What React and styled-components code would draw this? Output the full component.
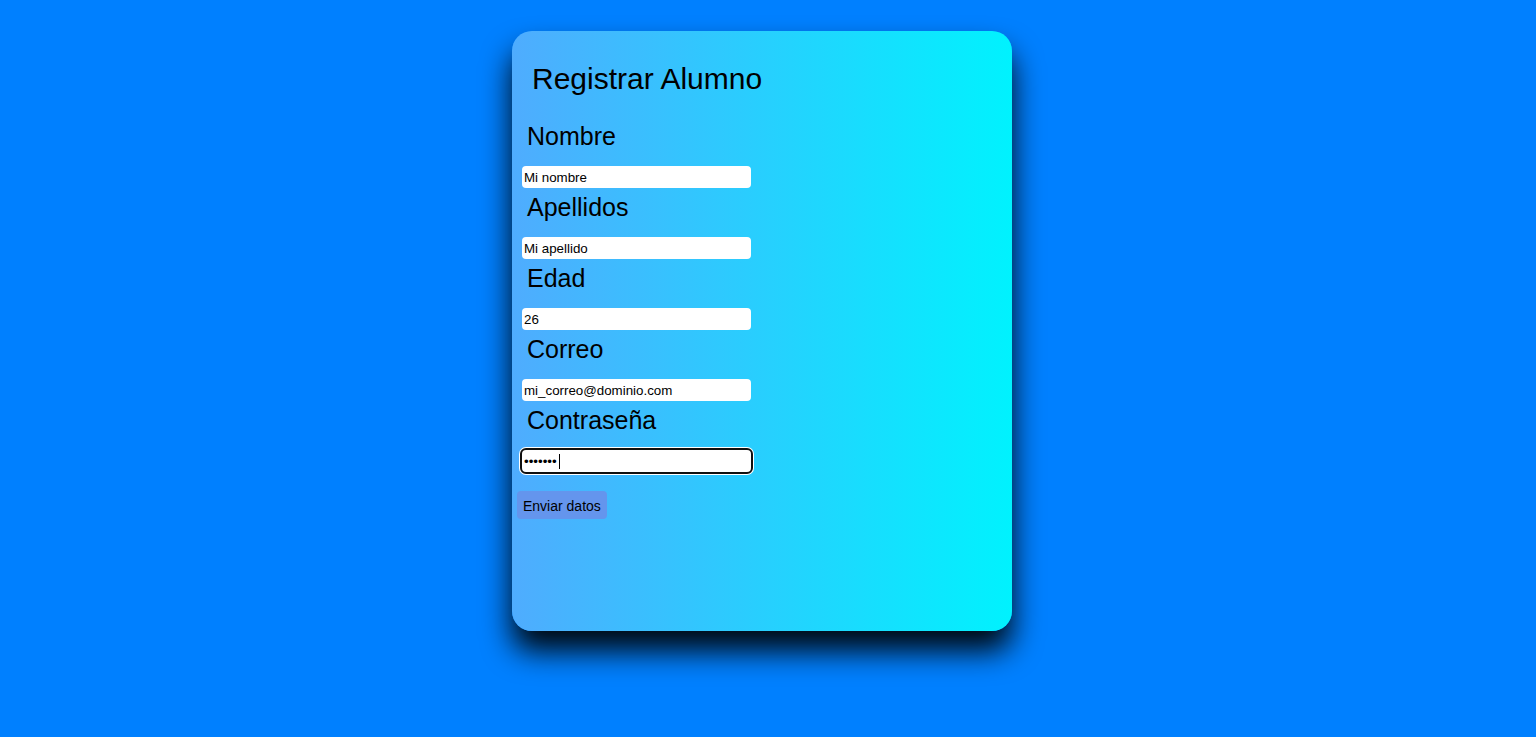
import React from "react";
import styled, { createGlobalStyle } from "styled-components";

const GlobalStyle = createGlobalStyle`
  body {
    margin: 0;
    background-color: #0080ff;
    font-family: "Liberation Sans", Arial, sans-serif;
  }
`;

const Page = styled.div`
  min-height: 100vh;
  box-sizing: border-box;
  padding-top: 31px;
  padding-left: calc(100% / 3);
`;

const Card = styled.div`
  width: 500px;
  height: 600px;
  box-sizing: border-box;
  padding: 0 5px;
  border-radius: 20px;
  background: linear-gradient(to right, #4facfe 0%, #00f2fe 100%);
  box-shadow: 0 20px 30px rgba(0, 0, 0, 0.95);
  display: flex;
  flex-direction: column;
  align-items: flex-start;
`;

const Title = styled.h2`
  margin: 31px 0 20px;
  padding-left: 15px;
  font-size: 30px;
  line-height: 34.5px;
  font-weight: normal;
  color: #000;
`;

const Label = styled.label`
  display: block;
  margin: 5px 0 16px 5px;
  padding-left: 5px;
  font-size: 25px;
  line-height: 28px;
  color: #000;
`;

const InputWrap = styled.div`
  position: relative;
  margin-left: 5px;
`;

const Input = styled.input`
  display: block;
  width: 229px;
  height: 22px;
  box-sizing: border-box;
  padding: 1px 2px 0;
  border: none;
  border-radius: 4px;
  background: #fff;
  color: #000;
  font-family: "Liberation Sans", Arial, sans-serif;
  font-size: 13.33px;
  outline: ${(p) => (p.$focused ? "2px solid #101010" : "none")};
  box-shadow: ${(p) => (p.$focused ? "0 0 0 3px #fff" : "none")};
`;

const Caret = styled.span`
  position: absolute;
  left: 37px;
  top: 4px;
  width: 1px;
  height: 15px;
  background: #000;
`;

const Button = styled.button`
  margin-top: 19px;
  padding: 7px 6px 5px;
  border: none;
  border-radius: 4px;
  background-color: #6495ed;
  color: #000;
  font-family: "Liberation Sans", Arial, sans-serif;
  font-size: 14px;
  line-height: 16px;
  cursor: pointer;
`;

const fields = [
  { label: "Nombre", type: "text", value: "Mi nombre" },
  { label: "Apellidos", type: "text", value: "Mi apellido" },
  { label: "Edad", type: "number", value: "26" },
  { label: "Correo", type: "email", value: "mi_correo@dominio.com" },
  { label: "Contraseña", type: "password", value: "1234567", focused: true },
];

export default function App() {
  return (
    <>
      <GlobalStyle />
      <Page>
        <Card>
          <Title>Registrar Alumno</Title>
          {fields.map((f) => (
            <React.Fragment key={f.label}>
              <Label>{f.label}</Label>
              <InputWrap>
                <Input type={f.type} defaultValue={f.value} $focused={f.focused} />
                {f.focused && <Caret />}
              </InputWrap>
            </React.Fragment>
          ))}
          <Button>Enviar datos</Button>
        </Card>
      </Page>
    </>
  );
}
